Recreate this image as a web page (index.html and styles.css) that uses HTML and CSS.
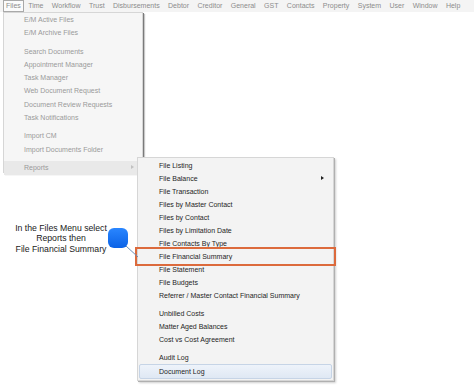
FILE: index.html
```html
<!DOCTYPE html>
<html lang="en">
<head>
  <meta charset="UTF-8">
  <meta name="viewport" content="width=device-width, initial-scale=1.0">
  <title>Files Menu - File Financial Summary</title>
  <link rel="stylesheet" href="styles.css">
</head>
<body>
  <div class="screen">

    <!-- top menu bar -->
    <div class="menubar">
      <span class="menubar-item active">Files</span>
      <span class="menubar-item">Time</span>
      <span class="menubar-item">Workflow</span>
      <span class="menubar-item">Trust</span>
      <span class="menubar-item">Disbursements</span>
      <span class="menubar-item">Debtor</span>
      <span class="menubar-item">Creditor</span>
      <span class="menubar-item">General</span>
      <span class="menubar-item">GST</span>
      <span class="menubar-item">Contacts</span>
      <span class="menubar-item">Property</span>
      <span class="menubar-item">System</span>
      <span class="menubar-item">User</span>
      <span class="menubar-item">Window</span>
      <span class="menubar-item">Help</span>
    </div>

    <!-- Files dropdown -->
    <div class="menu files-menu">
      <div class="menu-item">E/M Active Files</div>
      <div class="menu-item">E/M Archive Files</div>
      <div class="menu-sep"></div>
      <div class="menu-item">Search Documents</div>
      <div class="menu-item">Appointment Manager</div>
      <div class="menu-item">Task Manager</div>
      <div class="menu-item">Web Document Request</div>
      <div class="menu-item">Document Review Requests</div>
      <div class="menu-item">Task Notifications</div>
      <div class="menu-sep"></div>
      <div class="menu-item">Import CM</div>
      <div class="menu-item">Import Documents Folder</div>
      <div class="menu-sep"></div>
      <div class="menu-item open has-sub">Reports</div>
    </div>

    <!-- Reports submenu -->
    <div class="menu reports-menu">
      <div class="menu-item">File Listing</div>
      <div class="menu-item has-sub">File Balance</div>
      <div class="menu-item">File Transaction</div>
      <div class="menu-item">Files by Master Contact</div>
      <div class="menu-item">Files by Contact</div>
      <div class="menu-item">Files by Limitation Date</div>
      <div class="menu-item">File Contacts By Type</div>
      <div class="menu-item marked">File Financial Summary</div>
      <div class="menu-item">File Statement</div>
      <div class="menu-item">File Budgets</div>
      <div class="menu-item">Referrer / Master Contact Financial Summary</div>
      <div class="menu-sep"></div>
      <div class="menu-item">Unbilled Costs</div>
      <div class="menu-item">Matter Aged Balances</div>
      <div class="menu-item">Cost vs Cost Agreement</div>
      <div class="menu-sep"></div>
      <div class="menu-item">Audit Log</div>
      <div class="menu-item hover">Document Log</div>
    </div>

    <!-- annotation -->
    <div class="callout">
      <p>In the Files Menu select<br>Reports then<br>File Financial Summary</p>
      <span class="callout-dot"></span>
    </div>
    <svg class="callout-line" width="20" height="20" viewBox="0 0 20 20">
      <line x1="1" y1="1" x2="13" y2="12" stroke="#6a8fb8" stroke-width="1"/>
    </svg>

  </div>
</body>
</html>
```

FILE: styles.css
```css
body {
  margin: 0;
  background-color: #fff;
  font-family: "Liberation Sans", Arial, sans-serif;
}

.screen {
  position: relative;
  width: 474px;
  height: 390px;
  overflow: hidden;
}

/* menu bar */

.menubar {
  display: flex;
  align-items: center;
  height: 12px;
  padding-left: 3px;
  background-color: #f4f4f4;
  font-size: 7px;
  color: #8c8c8c;
}

.menubar-item {
  padding: 0 3px;
  line-height: 10px;
  border: 1px solid transparent;
  margin-right: 0.4px;
}

.menubar-item.active {
  border-color: #a9a9a9;
  background-color: #fbfbfb;
  padding: 0 2px;
}

/* dropdowns */

.menu {
  position: absolute;
  background-color: #f6f6f6;
  border: 1px solid #d6d6d6;
  font-size: 7px;
  box-sizing: border-box;
}

.files-menu {
  left: 3px;
  top: 12px;
  width: 140px;
  height: 161px;
  color: #9a9a9a;
  box-shadow: 1px 1px 0 #7a7a7a, 2px 2px 1px #c8c8c8;
}

.reports-menu {
  left: 137px;
  top: 157px;
  width: 197px;
  height: 224px;
  padding-top: 1px;
  color: #1e1e1e;
  background-color: #f3f3f3;
  box-shadow: 1px 1px 0 #b0b0b0, 2px 2px 2px #cfcfcf;
}

.menu-item {
  position: relative;
  height: 13px;
  line-height: 13px;
  padding-left: 20px;
  white-space: nowrap;
}

.files-menu .menu-item {
  height: 13.3px;
  line-height: 13.3px;
}

.reports-menu .menu-item {
  padding-left: 21px;
}

.menu-sep {
  height: 5px;
}

.files-menu .menu-item.open {
  height: 14px;
  line-height: 14px;
  background-color: #e9e9e9;
}

.menu-item.has-sub::after {
  content: "";
  position: absolute;
  right: 8px;
  top: 4px;
  border-top: 2.5px solid transparent;
  border-bottom: 2.5px solid transparent;
  border-left: 3px solid #c0c0c0;
}

.reports-menu .menu-item.has-sub::after {
  right: 9px;
  border-left-color: #222;
}

.menu-item.marked {
  outline: 2px solid #dc6a3c;
  outline-offset: 1px;
}

.reports-menu .menu-item.hover {
  margin: 0 1px;
  padding-left: 19px;
  background: linear-gradient(#eef3fa, #dfe8f4);
  border: 1px solid #c6d4e6;
  border-radius: 2px;
  height: 13px;
  line-height: 13px;
}

/* annotation */

.callout {
  position: absolute;
  left: 14px;
  top: 223px;
  display: flex;
  align-items: flex-start;
}

.callout p {
  margin: 0;
  width: 94px;
  text-align: center;
  font-size: 8.7px;
  line-height: 10.3px;
  color: #1a1a1a;
}

.callout-dot {
  display: block;
  width: 20px;
  height: 20px;
  margin-top: 5px;
  border-radius: 6px;
  background: linear-gradient(#2a86ff, #0a62e6);
}

.callout-line {
  position: absolute;
  left: 125px;
  top: 245px;
}
```
